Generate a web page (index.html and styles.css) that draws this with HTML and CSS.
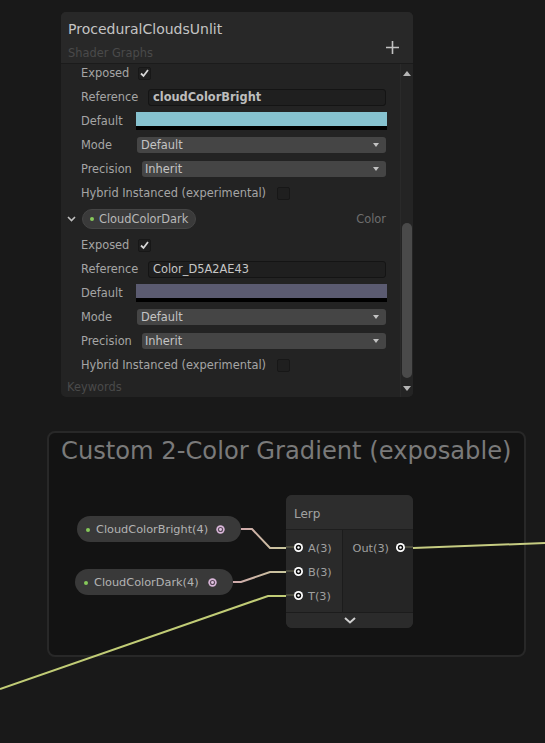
FILE: index.html
```html
<!DOCTYPE html>
<html>
<head>
<meta charset="utf-8">
<link rel="stylesheet" href="styles.css">
</head>
<body>
<div class="group">
  <div class="group-title">Custom 2-Color Gradient (exposable)</div>
</div>

<svg class="wires" width="545" height="743" viewBox="0 0 545 743">
  <defs>
    <linearGradient id="gA" gradientUnits="userSpaceOnUse" x1="241" y1="0" x2="286" y2="0">
      <stop offset="0" stop-color="#cfa9ab"/>
      <stop offset="1" stop-color="#c9c79c"/>
    </linearGradient>
    <linearGradient id="gB" gradientUnits="userSpaceOnUse" x1="233" y1="0" x2="286" y2="0">
      <stop offset="0" stop-color="#cfa9ab"/>
      <stop offset="1" stop-color="#c9c79c"/>
    </linearGradient>
  </defs>
  <polyline points="241,529 252,529 270,548 286,548" fill="none" stroke="url(#gA)" stroke-width="2"/>
  <polyline points="233,582 241,582 270,572 286,572" fill="none" stroke="url(#gB)" stroke-width="2"/>
  <polyline points="0,689 268,596 286,596" fill="none" stroke="#c1cc76" stroke-width="2"/>
  <polyline points="413,548 545,543" fill="none" stroke="#c6cc82" stroke-width="2"/>
</svg>

<div class="prop prop-bright">
  <span class="dot"></span>
  <span class="prop-name">CloudColorBright(4)</span>
  <svg class="pport" width="9" height="9" viewBox="0 0 9 9"><circle cx="4.5" cy="4.5" r="4.2" fill="#d9b6d9"/><circle cx="4.5" cy="4.5" r="2.6" fill="#5a4a5a"/><circle cx="4.5" cy="4.5" r="1.4" fill="#e2c4e2"/></svg>
</div>
<div class="prop prop-dark">
  <span class="dot"></span>
  <span class="prop-name">CloudColorDark(4)</span>
  <svg class="pport" width="9" height="9" viewBox="0 0 9 9"><circle cx="4.5" cy="4.5" r="4.2" fill="#d9b6d9"/><circle cx="4.5" cy="4.5" r="2.6" fill="#5a4a5a"/><circle cx="4.5" cy="4.5" r="1.4" fill="#e2c4e2"/></svg>
</div>

<div class="node">
  <div class="node-head">Lerp</div>
  <div class="node-body">
    <div class="inputs">
      <div class="port-row"><span class="stub"></span><svg class="port" width="9" height="9" viewBox="0 0 9 9"><circle cx="4.5" cy="4.5" r="4.5" fill="#fff"/><circle cx="4.5" cy="4.5" r="2.7" fill="#111"/><circle cx="4.5" cy="4.5" r="1.2" fill="#fff"/></svg><span class="port-lbl">A(3)</span></div>
      <div class="port-row"><span class="stub"></span><svg class="port" width="9" height="9" viewBox="0 0 9 9"><circle cx="4.5" cy="4.5" r="4.5" fill="#fff"/><circle cx="4.5" cy="4.5" r="2.7" fill="#111"/><circle cx="4.5" cy="4.5" r="1.2" fill="#fff"/></svg><span class="port-lbl">B(3)</span></div>
      <div class="port-row"><span class="stub"></span><svg class="port" width="9" height="9" viewBox="0 0 9 9"><circle cx="4.5" cy="4.5" r="4.5" fill="#fff"/><circle cx="4.5" cy="4.5" r="2.7" fill="#111"/><circle cx="4.5" cy="4.5" r="1.2" fill="#fff"/></svg><span class="port-lbl">T(3)</span></div>
    </div>
    <div class="outputs">
      <div class="port-row out"><span class="port-lbl">Out(3)</span><svg class="port" width="9" height="9" viewBox="0 0 9 9"><circle cx="4.5" cy="4.5" r="4.5" fill="#fff"/><circle cx="4.5" cy="4.5" r="2.7" fill="#111"/><circle cx="4.5" cy="4.5" r="1.2" fill="#fff"/></svg><span class="stub"></span></div>
    </div>
  </div>
  <div class="node-foot"><svg width="12" height="7" viewBox="0 0 12 7"><polyline points="1,1 6,5.5 11,1" fill="none" stroke="#cfcfcf" stroke-width="2"/></svg></div>
</div>

<div class="panel">
  <div class="panel-head">
    <div class="titles">
      <div class="title">ProceduralCloudsUnlit</div>
      <div class="subtitle">Shader Graphs</div>
    </div>
    <svg class="plus" width="13" height="13" viewBox="0 0 13 13"><path d="M6.5 0V13M0 6.5H13" stroke="#c2c2c2" stroke-width="1.6"/></svg>
  </div>
  <div class="panel-body">
    <div class="list">
      <div class="list-inner">
        <div class="row"><span class="lbl w-exp">Exposed</span><span class="check"><svg width="11" height="10" viewBox="0 0 11 10"><polyline points="2,5.5 4.5,8 9,2" fill="none" stroke="#d6d6d6" stroke-width="1.8"/></svg></span></div>
        <div class="row"><span class="lbl w-ref">Reference</span><span class="field bold">cloudColorBright</span></div>
        <div class="row"><span class="lbl w-def">Default</span><span class="swatch"><span class="sw-color c-bright"></span><span class="sw-alpha"></span></span></div>
        <div class="row"><span class="lbl w-mode">Mode</span><span class="dropdown">Default<span class="arrow"></span></span></div>
        <div class="row"><span class="lbl w-prec">Precision</span><span class="dropdown">Inherit<span class="arrow"></span></span></div>
        <div class="row"><span class="lbl w-hyb">Hybrid Instanced (experimental)</span><span class="check"></span></div>
        <div class="row pill-row">
          <svg class="chev" width="9" height="6" viewBox="0 0 9 6"><polyline points="1,1 4.5,4.5 8,1" fill="none" stroke="#c0c0c0" stroke-width="1.6"/></svg>
          <span class="pill"><span class="dot"></span>CloudColorDark</span>
          <span class="type">Color</span>
        </div>
        <div class="row"><span class="lbl w-exp">Exposed</span><span class="check"><svg width="11" height="10" viewBox="0 0 11 10"><polyline points="2,5.5 4.5,8 9,2" fill="none" stroke="#d6d6d6" stroke-width="1.8"/></svg></span></div>
        <div class="row"><span class="lbl w-ref">Reference</span><span class="field">Color_D5A2AE43</span></div>
        <div class="row"><span class="lbl w-def">Default</span><span class="swatch"><span class="sw-color c-dark"></span><span class="sw-alpha"></span></span></div>
        <div class="row"><span class="lbl w-mode">Mode</span><span class="dropdown">Default<span class="arrow"></span></span></div>
        <div class="row"><span class="lbl w-prec">Precision</span><span class="dropdown">Inherit<span class="arrow"></span></span></div>
        <div class="row"><span class="lbl w-hyb">Hybrid Instanced (experimental)</span><span class="check"></span></div>
        <div class="row kw-row">Keywords</div>
      </div>
    </div>
    <div class="scroll">
      <span class="tri-up"></span>
      <span class="thumb"></span>
      <span class="tri-down"></span>
    </div>
  </div>
</div>
</body>
</html>
```
FILE: styles.css
```css
html, body {
  margin: 0;
  padding: 0;
}
body {
  width: 545px;
  height: 743px;
  overflow: hidden;
  position: relative;
  background: #191919;
  font-family: "DejaVu Sans", "Verdana", sans-serif;
}

/* ---------- group ---------- */
.group {
  position: absolute;
  left: 47px;
  top: 431px;
  width: 479px;
  height: 226px;
  box-sizing: border-box;
  background: #131313;
  border: 2px solid #282828;
  border-radius: 8px;
}
.group-title {
  padding: 2px 0 0 12px;
  font-size: 24.2px;
  line-height: 32px;
  color: #7a7a7a;
  white-space: nowrap;
}

.wires {
  position: absolute;
  left: 0;
  top: 0;
}

/* ---------- property nodes ---------- */
.prop {
  position: absolute;
  height: 26px;
  box-sizing: border-box;
  border-radius: 13px;
  background: #393939;
  display: flex;
  align-items: center;
  padding: 1px 16px 0 9px;
  font-size: 11.3px;
  color: #b3b3b3;
}
.prop-bright { left: 77px; top: 516px; width: 164px; }
.prop-dark { left: 75px; top: 569px; width: 158px; }
.dot {
  width: 4px;
  height: 4px;
  border-radius: 50%;
  background: #86c95a;
  flex: none;
}
.prop-name { margin-left: 6px; white-space: nowrap; }
.pport { margin-left: auto; flex: none; }

/* ---------- lerp node ---------- */
.node {
  position: absolute;
  left: 286px;
  top: 495px;
  width: 127px;
  height: 133px;
  border-radius: 6px;
  overflow: hidden;
  background: #2a2a2a;
  display: flex;
  flex-direction: column;
}
.node-head {
  height: 35px;
  box-sizing: border-box;
  border-bottom: 1px solid #1e1e1e;
  background: #2d2d2d;
  padding: 2px 0 0 8px;
  font-size: 12px;
  line-height: 34px;
  color: #a2a2a2;
}
.node-body {
  flex: 1;
  display: flex;
}
.inputs {
  width: 57px;
  border-right: 1px solid #1c1c1c;
  background: #2a2a2a;
  padding-top: 5px;
  box-sizing: border-box;
}
.outputs {
  flex: 1;
  background: #252525;
  padding-top: 5px;
}
.port-row {
  height: 24px;
  display: flex;
  align-items: center;
  font-size: 11.3px;
  color: #a0a0a0;
}
.port-row.out { justify-content: flex-end; }
.stub {
  width: 8px;
  height: 2px;
  background: #4b4b3e;
  flex: none;
}
.port { flex: none; }
.port-lbl { margin-left: 5px; white-space: nowrap; padding-top: 2px; }
.out .port-lbl { margin-left: 0; margin-right: 7px; }
.node-foot {
  height: 16px;
  box-sizing: border-box;
  border-top: 1px solid #1c1c1c;
  background: #2b2b2b;
  display: flex;
  align-items: center;
  justify-content: center;
}

/* ---------- blackboard panel ---------- */
.panel {
  position: absolute;
  left: 61px;
  top: 12px;
  width: 352px;
  height: 385px;
  background: #232323;
  border-radius: 5px;
  overflow: hidden;
  display: flex;
  flex-direction: column;
}
.panel-head {
  height: 52px;
  flex: none;
  box-sizing: border-box;
  background: #282828;
  border-bottom: 1px solid #1b1b1b;
  display: flex;
  padding: 8px 14px 0 7px;
}
.titles { flex: 1; }
.title {
  font-size: 14px;
  line-height: 18px;
  color: #c4c4c4;
}
.subtitle {
  margin-top: 8px;
  font-size: 11.4px;
  line-height: 14px;
  color: #4a4a4a;
}
.plus { margin-top: 21px; flex: none; }

.panel-body {
  flex: 1;
  display: flex;
  min-height: 0;
}
.list {
  flex: 1;
  overflow: hidden;
}
.list-inner { margin-top: -3px; }
.row {
  height: 24px;
  display: flex;
  align-items: center;
  padding: 0 14px 0 20px;
  font-size: 11.4px;
}
.lbl {
  flex: none;
  color: #a5a5a5;
  white-space: nowrap;
}
.w-exp { width: 57px; }
.w-ref { width: 67px; }
.w-def { width: 55px; }
.w-mode { width: 56px; }
.w-prec { width: 61px; }
.w-hyb { width: 196px; }

.check {
  width: 13px;
  height: 13px;
  box-sizing: border-box;
  background: #1f1f1f;
  border: 1px solid #171717;
  border-radius: 2px;
  display: flex;
  align-items: center;
  justify-content: center;
}
.check svg { display: block; }
.field {
  flex: 1;
  height: 17px;
  box-sizing: border-box;
  background: #1f1f1f;
  border: 1px solid #141414;
  border-radius: 3px;
  padding-left: 4px;
  line-height: 15px;
  color: #c6c6c6;
  white-space: nowrap;
}
.field.bold { font-weight: bold; color: #bdbdbd; }
.swatch {
  flex: 1;
  height: 18px;
  display: flex;
  flex-direction: column;
  margin-right: -1px;
}
.sw-color { height: 14px; }
.c-bright { background: #86c2cf; }
.c-dark { background: #5b5b71; }
.sw-alpha { height: 4px; background: #000; }
.dropdown {
  flex: 1;
  height: 16px;
  box-sizing: border-box;
  background: #454545;
  border-radius: 3px;
  padding: 0 7px 0 4px;
  display: flex;
  align-items: center;
  justify-content: space-between;
  color: #c4c4c4;
}
.w-prec + .dropdown { padding-left: 3px; }
.arrow {
  width: 0;
  height: 0;
  border-left: 3.5px solid transparent;
  border-right: 3.5px solid transparent;
  border-top: 4px solid #c2c2c2;
}

.pill-row {
  height: 28px;
  padding-left: 6px;
}
.chev { flex: none; margin-right: 6px; }
.pill {
  height: 20px;
  box-sizing: border-box;
  border-radius: 10px;
  background: #3a3a3a;
  border: 1px solid #454545;
  display: flex;
  align-items: center;
  padding: 0 7px 0 7px;
  color: #b8b8b8;
  white-space: nowrap;
}
.pill .dot { margin-right: 5px; }
.type {
  margin-left: auto;
  color: #6e6e6e;
}
.kw-row {
  height: 20px;
  padding-left: 6px;
  color: #4a4a4a;
}

.scroll {
  width: 12px;
  flex: none;
  border-left: 1px solid #2a2a2a;
  background: #242424;
  display: flex;
  flex-direction: column;
  align-items: center;
  padding-top: 7px;
}
.tri-up {
  width: 0;
  height: 0;
  border-left: 4px solid transparent;
  border-right: 4px solid transparent;
  border-bottom: 5px solid #b5b5b5;
}
.thumb {
  width: 10px;
  height: 155px;
  margin-top: 147px;
  border-radius: 5px;
  background: #4a4a4a;
}
.tri-down {
  margin-top: 8px;
  width: 0;
  height: 0;
  border-left: 4px solid transparent;
  border-right: 4px solid transparent;
  border-top: 5px solid #b5b5b5;
}
```
